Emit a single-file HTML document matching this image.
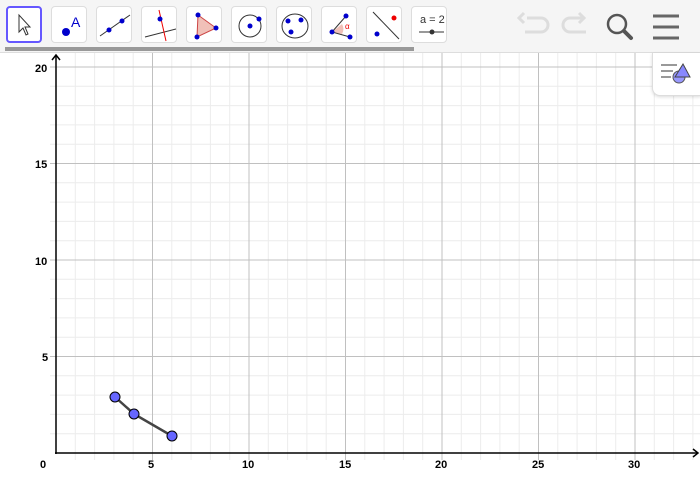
<!DOCTYPE html><html><head><style>body{margin:0;width:700px;height:500px;overflow:hidden;background:#fff;font-family:"Liberation Sans",sans-serif;position:relative}
.tb{position:absolute;left:0;top:0;width:700px;height:52px;background:#f5f5f5;border-bottom:1px solid #ddd}
.b{position:absolute;top:6px;width:36px;height:37px;background:#fff;border:1px solid #ddd;border-radius:4px;box-sizing:border-box}
</style></head><body>
<svg style="position:absolute;left:0;top:0" width="700" height="500">
<g stroke="#eee" stroke-width="1">
<path id="minx" d=""/>
</g>
<script>
</script>
</svg>
<svg style="position:absolute;left:0;top:0" width="700" height="500" font-family="Liberation Sans" font-weight="bold" font-size="11">
<g stroke="#ececec">
<line x1="75.3" y1="53" x2="75.3" y2="460"/><line x1="94.6" y1="53" x2="94.6" y2="460"/><line x1="113.9" y1="53" x2="113.9" y2="460"/><line x1="133.2" y1="53" x2="133.2" y2="460"/>
<line x1="171.8" y1="53" x2="171.8" y2="460"/><line x1="191.1" y1="53" x2="191.1" y2="460"/><line x1="210.4" y1="53" x2="210.4" y2="460"/><line x1="229.7" y1="53" x2="229.7" y2="460"/>
<line x1="268.3" y1="53" x2="268.3" y2="460"/><line x1="287.6" y1="53" x2="287.6" y2="460"/><line x1="306.9" y1="53" x2="306.9" y2="460"/><line x1="326.2" y1="53" x2="326.2" y2="460"/>
<line x1="364.8" y1="53" x2="364.8" y2="460"/><line x1="384.1" y1="53" x2="384.1" y2="460"/><line x1="403.4" y1="53" x2="403.4" y2="460"/><line x1="422.7" y1="53" x2="422.7" y2="460"/>
<line x1="461.3" y1="53" x2="461.3" y2="460"/><line x1="480.6" y1="53" x2="480.6" y2="460"/><line x1="499.9" y1="53" x2="499.9" y2="460"/><line x1="519.2" y1="53" x2="519.2" y2="460"/>
<line x1="557.8" y1="53" x2="557.8" y2="460"/><line x1="577.1" y1="53" x2="577.1" y2="460"/><line x1="596.4" y1="53" x2="596.4" y2="460"/><line x1="615.7" y1="53" x2="615.7" y2="460"/>
<line x1="654.3" y1="53" x2="654.3" y2="460"/><line x1="673.6" y1="53" x2="673.6" y2="460"/><line x1="692.9" y1="53" x2="692.9" y2="460"/>
<line x1="50" y1="433.7" x2="700" y2="433.7"/><line x1="50" y1="414.4" x2="700" y2="414.4"/><line x1="50" y1="395.1" x2="700" y2="395.1"/><line x1="50" y1="375.8" x2="700" y2="375.8"/>
<line x1="50" y1="337.2" x2="700" y2="337.2"/><line x1="50" y1="317.9" x2="700" y2="317.9"/><line x1="50" y1="298.6" x2="700" y2="298.6"/><line x1="50" y1="279.3" x2="700" y2="279.3"/>
<line x1="50" y1="240.7" x2="700" y2="240.7"/><line x1="50" y1="221.4" x2="700" y2="221.4"/><line x1="50" y1="202.1" x2="700" y2="202.1"/><line x1="50" y1="182.8" x2="700" y2="182.8"/>
<line x1="50" y1="144.2" x2="700" y2="144.2"/><line x1="50" y1="124.9" x2="700" y2="124.9"/><line x1="50" y1="105.6" x2="700" y2="105.6"/><line x1="50" y1="86.3" x2="700" y2="86.3"/>
</g>
<g stroke="#c0c0c0">
<line x1="152.5" y1="53" x2="152.5" y2="460"/><line x1="249" y1="53" x2="249" y2="460"/><line x1="345.5" y1="53" x2="345.5" y2="460"/><line x1="442" y1="53" x2="442" y2="460"/><line x1="538.5" y1="53" x2="538.5" y2="460"/><line x1="635" y1="53" x2="635" y2="460"/>
<line x1="50" y1="356.5" x2="700" y2="356.5"/><line x1="50" y1="260" x2="700" y2="260"/><line x1="50" y1="163.5" x2="700" y2="163.5"/><line x1="50" y1="67" x2="700" y2="67"/>
</g>
<g stroke="#000" stroke-width="1.5" fill="none">
<line x1="56" y1="56" x2="56" y2="454"/><line x1="55" y1="453" x2="698" y2="453"/>
<path d="M52 60 L56 55 L60 60"/><path d="M693 449 L698 453 L693 457"/>
</g>
<g fill="#000">
<text x="40" y="468">0</text><text x="148" y="468">5</text><text x="242" y="468">10</text><text x="339" y="468">15</text><text x="435" y="468">20</text><text x="532" y="468">25</text><text x="628" y="468">30</text>
<text x="42" y="361">5</text><text x="35" y="265">10</text><text x="35" y="168">15</text><text x="35" y="72">20</text>
</g>
<polyline points="115,397 134,414 172,436" stroke="#444" stroke-width="2.5" fill="none"/>
<g fill="#6666ff" stroke="#000" stroke-width="1"><circle cx="115" cy="397" r="5"/><circle cx="134" cy="414" r="5"/><circle cx="172" cy="436" r="5"/></g>
</svg>
<div class="tb">
<div class="b" style="left:6px;border:2px solid #6557ff"><svg width="32" height="33"><path d="M11 7 L11 24 L15 20 L18 27 L20 26 L17 19 L22 19 Z" fill="#fff" stroke="#333"/></svg></div>
<div class="b" style="left:51px"><svg width="34" height="35"><circle cx="14" cy="25" r="4" fill="#00c"/><text x="19" y="20" fill="#00c" font-size="14" font-family="Liberation Sans">A</text></svg></div>
<div class="b" style="left:96px"><svg width="34" height="35"><line x1="3" y1="29" x2="33" y2="8" stroke="#333"/><circle cx="12" cy="23" r="2.5" fill="#00c"/><circle cx="25" cy="14" r="2.5" fill="#00c"/></svg></div>
<div class="b" style="left:141px"><svg width="34" height="35"><line x1="3" y1="30" x2="34" y2="22" stroke="#333"/><line x1="17" y1="3" x2="24" y2="34" stroke="#e00"/><circle cx="18" cy="12" r="2.5" fill="#00c"/></svg></div>
<div class="b" style="left:186px"><svg width="34" height="35"><polygon points="11,8 29,21 10,30" fill="#f0c0b8" stroke="#c44"/><circle cx="11" cy="8" r="2.5" fill="#00c"/><circle cx="29" cy="21" r="2.5" fill="#00c"/><circle cx="10" cy="30" r="2.5" fill="#00c"/></svg></div>
<div class="b" style="left:231px"><svg width="34" height="35"><circle cx="18" cy="19" r="11" fill="none" stroke="#333"/><circle cx="18" cy="19" r="2.5" fill="#00c"/><circle cx="27" cy="12" r="2.5" fill="#00c"/></svg></div>
<div class="b" style="left:276px"><svg width="34" height="35"><ellipse cx="18" cy="19" rx="13" ry="12" fill="none" stroke="#333"/><circle cx="11" cy="14" r="2.5" fill="#00c"/><circle cx="24" cy="13" r="2.5" fill="#00c"/><circle cx="14" cy="25" r="2.5" fill="#00c"/></svg></div>
<div class="b" style="left:321px"><svg width="34" height="35"><path d="M10 25 L20 17 A10 10 0 0 1 20 27 Z" fill="#f0c0b8"/><polyline points="24,9 10,25 28,30" fill="none" stroke="#333"/><circle cx="24" cy="9" r="2.5" fill="#00c"/><circle cx="10" cy="25" r="2.5" fill="#00c"/><circle cx="28" cy="30" r="2.5" fill="#00c"/><text x="23" y="22" fill="#e00" font-size="8">α</text></svg></div>
<div class="b" style="left:366px"><svg width="34" height="35"><line x1="6" y1="5" x2="32" y2="32" stroke="#333"/><circle cx="10" cy="27" r="2.5" fill="#00c"/><circle cx="27" cy="11" r="2.5" fill="#e00"/></svg></div>
<div class="b" style="left:411px"><svg width="34" height="35"><text x="8" y="16" font-size="11" font-family="Liberation Sans" fill="#333">a = 2</text><line x1="7" y1="25" x2="32" y2="25" stroke="#333"/><circle cx="20" cy="25" r="2.5" fill="#333"/></svg></div>
<div style="position:absolute;left:5px;top:47px;width:409px;height:4px;background:#999"></div>
<svg style="position:absolute;left:515px;top:8px" width="185" height="40">
<g stroke="#ddd" stroke-width="3" fill="none"><path d="M12 10 H26 A7 7 0 0 1 26 24 H10"/><path d="M9 5 L4 10 L9 15"/><path d="M69 10 H55 A7 7 0 0 0 55 24 H71"/><path d="M64 5 L69 10 L64 15"/></g>
<circle cx="102" cy="16" r="9" fill="none" stroke="#555" stroke-width="2.5"/><line x1="109" y1="23" x2="116" y2="30" stroke="#555" stroke-width="4" stroke-linecap="round"/>
<g stroke="#666" stroke-width="3"><line x1="138" y1="8" x2="164" y2="8"/><line x1="138" y1="19" x2="164" y2="19"/><line x1="138" y1="30" x2="164" y2="30"/></g>
</svg>
</div>
<div style="position:absolute;left:652px;top:53px;width:48px;height:42px;background:#fff;border:1px solid #ddd;border-top:none;border-right:none;border-radius:0 0 0 8px;box-shadow:0 1px 3px rgba(0,0,0,.15)">
<svg width="48" height="42"><g stroke="#999" stroke-width="2"><line x1="8" y1="12" x2="24" y2="12"/><line x1="8" y1="18" x2="20" y2="18"/><line x1="8" y1="24" x2="18" y2="24"/></g><circle cx="26" cy="24" r="6" fill="#99f" stroke="#555"/><polygon points="30,11 37,24 22,24" fill="#88f" stroke="#444"/></svg>
</div>
</body></html>
